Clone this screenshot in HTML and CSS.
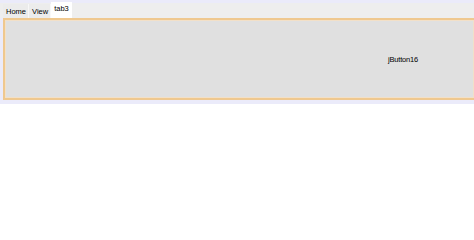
FILE: index.html
```html
<!DOCTYPE html>
<html>
<head>
<meta charset="utf-8">
<link rel="stylesheet" href="styles.css">
</head>
<body>
<div class="frame">
  <div class="tabs">
    <div class="tab">Home</div>
    <div class="tab">View</div>
    <div class="tab active">tab3</div>
  </div>
  <div class="panel">
    <div class="inner">
      <span class="button">jButton16</span>
    </div>
  </div>
</div>
</body>
</html>
```
FILE: styles.css
```css
html, body {
  margin: 0;
  padding: 0;
  background: #ffffff;
}
body {
  font-family: "Liberation Sans", Arial, sans-serif;
  font-size: 7.5px;
  color: #000;
}
.frame {
  width: 474px;
  height: 104px;
  background: #ebebfa;
  box-sizing: border-box;
  padding-top: 3px;
  padding-left: 3px;
  display: flex;
  flex-direction: column;
}
.tabs {
  display: flex;
  align-items: flex-end;
  height: 15px;
  background: #eeeeee;
  margin-left: -3px;
  padding-left: 3px;
}
.tab {
  height: 14px;
  line-height: 15px;
  padding: 0 2px 0 3px;
  background: #ececec;
  border-right: 1px solid #f8f8f8;
}
.tab.active {
  background: #ffffff;
  height: 16px;
  line-height: 13px;
  margin-top: -1px;
  padding: 0 3px;
  border-right: none;
}
.panel {
  height: 82px;
  box-sizing: border-box;
  border: 2px solid #efc88f;
  border-right: none;
  padding: 1px;
  background: #f2e0c8;
}
.inner {
  height: 100%;
  background: #e0e0e0;
  display: flex;
  align-items: center;
  justify-content: flex-end;
  padding-right: 55px;
}
.button {
  letter-spacing: -0.2px;
}
```
